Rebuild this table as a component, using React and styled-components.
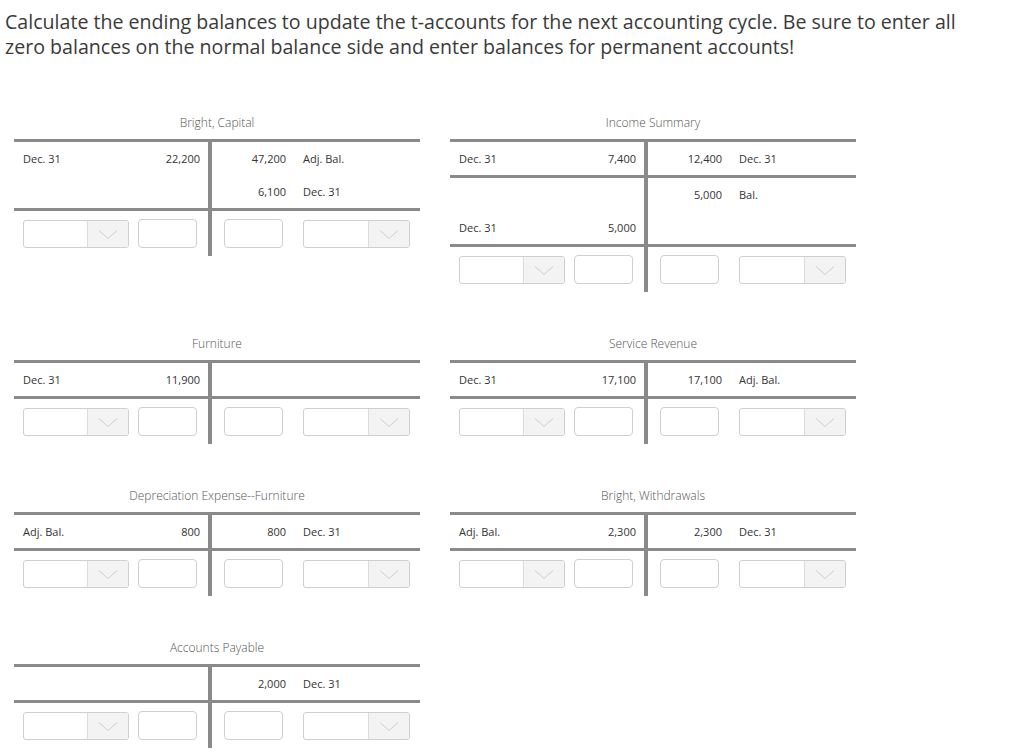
import React from 'react';
import styled, { createGlobalStyle } from 'styled-components';

const GlobalStyle = createGlobalStyle`
  body {
    margin: 0;
    background: #fff;
    font-family: "Open Sans", "Liberation Sans", sans-serif;
    color: #333;
  }
`;

const Page = styled.div`
  padding: 9px 5px 0 5px;
`;

const Prompt = styled.p`
  margin: 0;
  max-width: 965px;
  font-size: 19.6px;
  line-height: 25px;
  color: #3a3a3a;
`;

const Board = styled.div`
  display: grid;
  grid-template-columns: 406px 406px;
  column-gap: 30px;
  row-gap: 43px;
  margin: 55px 0 0 9px;
  align-items: start;
`;

const Account = styled.div`
  display: flex;
  flex-direction: column;
`;

const Title = styled.div`
  text-align: center;
  font-size: 12px;
  font-weight: 300;
  line-height: 18px;
  color: #555;
  margin-bottom: 7px;
`;

const Rule = styled.div`
  height: 3px;
  background: #8a8a8a;
`;

const Row = styled.div`
  display: flex;
  height: ${(p) => p.$h}px;
  font-size: 11px;
  color: #333;
`;

const LeftSide = styled.div`
  box-sizing: border-box;
  width: 198px;
  border-right: 4px solid #8a8a8a;
  display: flex;
  align-items: ${(p) => (p.$inputs ? 'flex-start' : 'center')};
  justify-content: ${(p) => (p.$inputs ? 'flex-start' : 'space-between')};
  gap: 9px;
  padding: ${(p) => (p.$inputs ? '8px 0 0 9px' : '0 8px 0 9px')};
`;

const RightSide = styled.div`
  flex: 1;
  display: flex;
  align-items: ${(p) => (p.$inputs ? 'flex-start' : 'center')};
  gap: ${(p) => (p.$inputs ? '20px' : '17px')};
  padding: ${(p) => (p.$inputs ? '8px 0 0 12px' : '0')};
`;

const Amount = styled.span`
  width: 74px;
  text-align: right;
`;

const SelectBox = styled.div`
  box-sizing: border-box;
  width: ${(p) => p.$w}px;
  height: 28px;
  border: 1px solid #cfcfcf;
  border-radius: 3px;
  display: flex;
  overflow: hidden;
  margin-top: 1px;
  background: #fff;
`;

const SelectValue = styled.div`
  flex: 1;
`;

const SelectArrow = styled.div`
  width: 40px;
  background: #f3f3f3;
  border-left: 1px solid #dcdcdc;
  display: flex;
  align-items: center;
  justify-content: center;
`;

const TextBox = styled.input`
  box-sizing: border-box;
  width: 59px;
  height: 29px;
  margin: 0;
  border: 1px solid #cfcfcf;
  border-radius: 4px;
  background: #fff;
  outline: none;
  padding: 0 4px;
  font: inherit;
`;

const Chevron = () => (
  <svg width="20" height="11" viewBox="0 0 20 11">
    <polyline points="1,1.5 10,9.5 19,1.5" fill="none" stroke="#cdcdcd" strokeWidth="1" />
  </svg>
);

const Select = ({ w }) => (
  <SelectBox $w={w}>
    <SelectValue />
    <SelectArrow>
      <Chevron />
    </SelectArrow>
  </SelectBox>
);

const EntryRow = ({ e }) => (
  <Row $h={33}>
    <LeftSide>
      <span>{e.l}</span>
      <span>{e.la}</span>
    </LeftSide>
    <RightSide>
      <Amount>{e.ra}</Amount>
      <span>{e.r}</span>
    </RightSide>
  </Row>
);

const TAccount = ({ title, groups }) => (
  <Account>
    <Title>{title}</Title>
    <Rule />
    {groups.map((g, gi) => (
      <React.Fragment key={gi}>
        {g.map((e, i) => (
          <EntryRow key={i} e={e} />
        ))}
        <Rule />
      </React.Fragment>
    ))}
    <Row $h={45}>
      <LeftSide $inputs>
        <Select w={106} />
        <TextBox />
      </LeftSide>
      <RightSide $inputs>
        <TextBox />
        <Select w={107} />
      </RightSide>
    </Row>
  </Account>
);

const accounts = [
  {
    title: 'Bright, Capital',
    groups: [[
      { l: 'Dec. 31', la: '22,200', ra: '47,200', r: 'Adj. Bal.' },
      { ra: '6,100', r: 'Dec. 31' },
    ]],
  },
  {
    title: 'Income Summary',
    groups: [
      [{ l: 'Dec. 31', la: '7,400', ra: '12,400', r: 'Dec. 31' }],
      [
        { ra: '5,000', r: 'Bal.' },
        { l: 'Dec. 31', la: '5,000' },
      ],
    ],
  },
  {
    title: 'Furniture',
    groups: [[{ l: 'Dec. 31', la: '11,900' }]],
  },
  {
    title: 'Service Revenue',
    groups: [[{ l: 'Dec. 31', la: '17,100', ra: '17,100', r: 'Adj. Bal.' }]],
  },
  {
    title: 'Depreciation Expense--Furniture',
    groups: [[{ l: 'Adj. Bal.', la: '800', ra: '800', r: 'Dec. 31' }]],
  },
  {
    title: 'Bright, Withdrawals',
    groups: [[{ l: 'Adj. Bal.', la: '2,300', ra: '2,300', r: 'Dec. 31' }]],
  },
  {
    title: 'Accounts Payable',
    groups: [[{ ra: '2,000', r: 'Dec. 31' }]],
  },
];

const App = () => (
  <Page>
    <GlobalStyle />
    <Prompt>
      Calculate the ending balances to update the t-accounts for the next accounting cycle. Be sure to enter all
      zero balances on the normal balance side and enter balances for permanent accounts!
    </Prompt>
    <Board>
      {accounts.map((a) => (
        <TAccount key={a.title} title={a.title} groups={a.groups} />
      ))}
    </Board>
  </Page>
);

export default App;
